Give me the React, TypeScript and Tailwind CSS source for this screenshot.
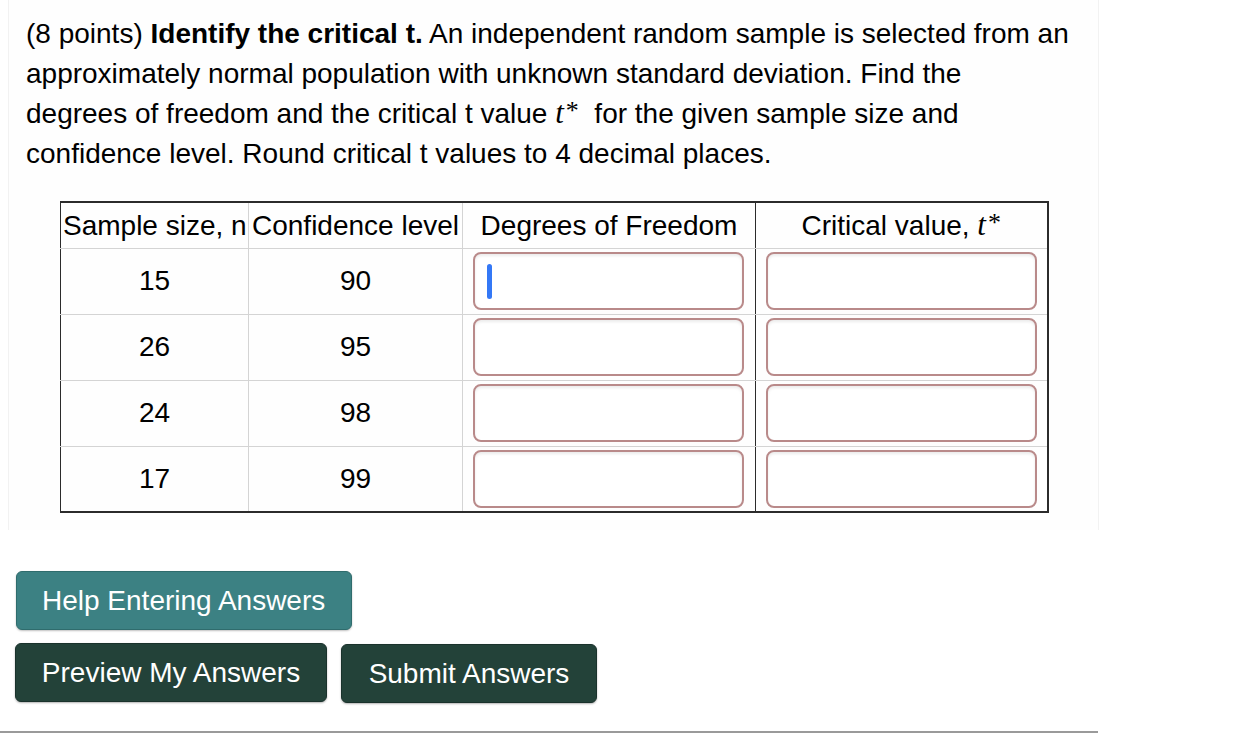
import React from 'react';

const rows = [
  { n: 15, level: 90 },
  { n: 26, level: 95 },
  { n: 24, level: 98 },
  { n: 17, level: 99 },
];

const TStar = () => (
  <span className="font-['Liberation_Serif',serif] italic text-[31px] leading-none">
    t<sup className="not-italic text-[26px] leading-none relative top-[-4px] ml-[2px]">*</sup>
  </span>
);

const AnswerBox: React.FC<{ focused?: boolean }> = ({ focused }) => (
  <div className="h-[58px] w-full rounded-[8px] border-2 border-[#b98a8a] bg-white shadow-[inset_0_2px_3px_rgba(0,0,0,0.08)] flex items-center pl-[12px]">
    {focused && <div className="w-[5px] h-[35px] rounded-full bg-[#3478f6]"></div>}
  </div>
);

export default function App() {
  return (
    <div className="bg-white min-h-[733px] font-['Liberation_Sans',Arial,sans-serif] text-black">
      {/* problem panel */}
      <div className="ml-[8px] w-[1091px] border-x border-[#f2f2f2] bg-[#fefefe] pl-[17px] pt-[14px] pb-[17px]">
        <p className="text-[28px] leading-[40px] whitespace-nowrap">
          (8 points) <b>Identify the critical t.</b> An independent random sample is selected from an
          <br />
          approximately normal population with unknown standard deviation. Find the
          <br />
          degrees of freedom and the critical t value <TStar />&nbsp; for the given sample size and
          <br />
          confidence level. Round critical t values to 4 decimal places.
        </p>

        <table className="mt-[27px] ml-[34px] border-collapse border-t-2 border-b-2 border-r-2 border-l border-[#2b2b2b] text-[28px]">
          <colgroup>
            <col className="w-[188px]" />
            <col className="w-[214px]" />
            <col className="w-[293px]" />
            <col className="w-[292px]" />
          </colgroup>
          <thead>
            <tr className="h-[46px] leading-[32px]">
              <th className="font-normal text-left pl-[2px] pt-[2px] border-r border-b border-[#d4d4d4] whitespace-nowrap">Sample size, n</th>
              <th className="font-normal text-left pl-[3px] pt-[2px] border-r border-b border-[#d4d4d4] whitespace-nowrap">Confidence level</th>
              <th className="font-normal text-center pt-[2px] border-b border-[#d4d4d4] whitespace-nowrap">Degrees of Freedom</th>
              <th className="font-normal text-center border-l border-l-[#2b2b2b] border-b border-b-[#d4d4d4] whitespace-nowrap">
                Critical value, <TStar />
              </th>
            </tr>
          </thead>
          <tbody>
            {rows.map((r, i) => (
              <tr key={r.n} className="h-[66px]">
                <td className={`text-center border-r border-[#d4d4d4] ${i < rows.length - 1 ? 'border-b' : ''}`}>{r.n}</td>
                <td className={`text-center border-r border-[#d4d4d4] ${i < rows.length - 1 ? 'border-b' : ''}`}>{r.level}</td>
                <td className={`pl-[10px] pr-[11px] border-[#d4d4d4] ${i < rows.length - 1 ? 'border-b' : ''}`}>
                  <AnswerBox focused={i === 0} />
                </td>
                <td className={`pl-[10px] pr-[10px] border-l border-l-[#2b2b2b] border-b-[#d4d4d4] ${i < rows.length - 1 ? 'border-b' : ''}`}>
                  <AnswerBox />
                </td>
              </tr>
            ))}
          </tbody>
        </table>
      </div>

      {/* buttons */}
      <div className="pl-[16px] pt-[41px]">
        <button className="h-[59px] w-[336px] rounded-[6px] border border-[#2f6c6d] bg-[#3c8183] text-white text-[28px] text-left pl-[25px] shadow-[0_1px_2px_rgba(0,0,0,0.25)]">
          Help Entering Answers
        </button>
      </div>
      <div className="flex gap-[14px] pl-[15px] pt-[13px]">
        <button className="h-[59px] w-[312px] rounded-[6px] border border-[#1a322c] bg-[#234239] text-white text-[28px] shadow-[0_1px_2px_rgba(0,0,0,0.3)]">
          Preview My Answers
        </button>
        <button className="mt-[1px] h-[59px] w-[256px] rounded-[6px] border border-[#1a322c] bg-[#234239] text-white text-[28px] shadow-[0_1px_2px_rgba(0,0,0,0.3)]">
          Submit Answers
        </button>
      </div>
      <div className="mt-[28px] w-[1098px] h-[2px] bg-[#9a9a9a]"></div>
    </div>
  );
}
